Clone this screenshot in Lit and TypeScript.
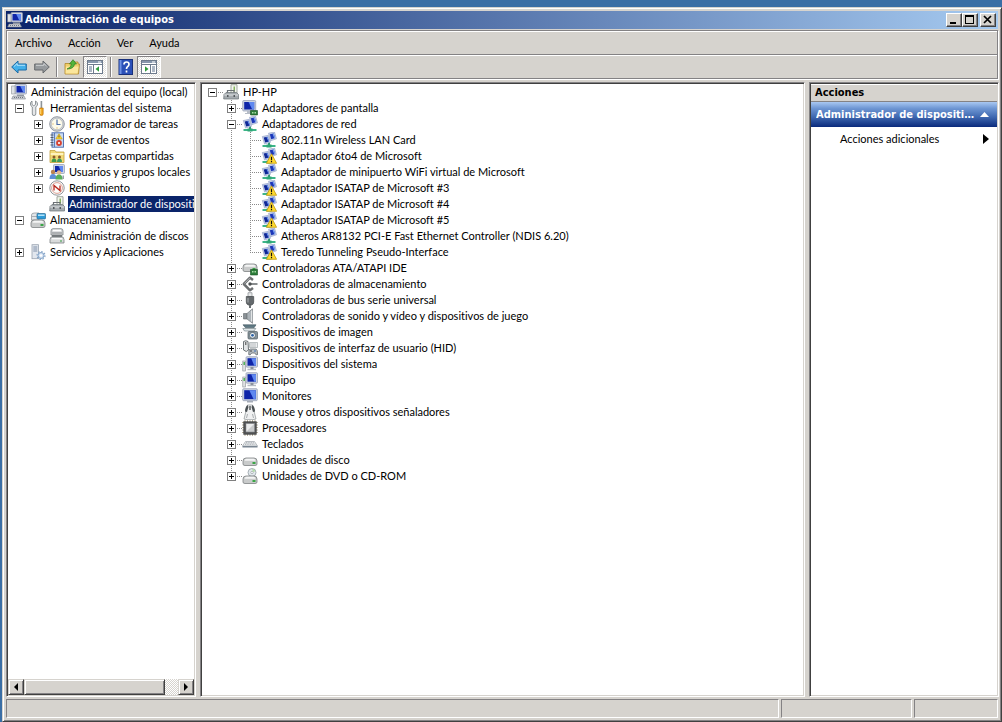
import { LitElement, html, css, svg, nothing, TemplateResult, SVGTemplateResult } from 'lit';
import { customElement, property } from 'lit/decorators.js';

interface Node {
  label: string;
  icon: string;
  open?: boolean;
  selected?: boolean;
  children?: Node[];
}

/* Building blocks shared by several glyphs. */
const screen = (x: number, y: number, w: number, h: number) => svg`
  <rect x=${x} y=${y} width=${w} height=${h} rx="1" fill="#cdd4e2" stroke="#8f99b0" stroke-width=".7"/>
  <rect x=${x + 1.5} y=${y + 1.5} width=${w - 3} height=${h - 3} fill="#0f25a8"/>
  <path d="M${x + w * 0.45} ${y + 1.5}H${x + w - 1.5}v${h - 3}h-${w * 0.15}z" fill="#5f88f0"/>`;

const drive = (y: number) => svg`
  <path d="M1 ${y + 3}q0-3 3-3h8q3 0 3 3v3q0 1.500-2 1.500H3q-2 0-2-1.500z" fill="#c9cbcb" stroke="#7d8183" stroke-width=".8"/>
  <path d="M2.500 ${y + 2.800}q.5-2 2-2h7q1.500 0 2 2z" fill="#f4f5f5"/>
  <rect x="10.500" y=${y + 4} width="3" height="2" fill="#3aa546"/>`;

const network = svg`
  <path d="M1.500 13h13v2h-13z" fill="#3cb487"/><path d="M7 10h2v4H7z" fill="#2b9a6c"/><path d="M5.500 12.500h5v3h-5z" fill="#2fa676"/>
  <path d="M7.500 1.200l6-1.200 2 6.800-6 2z" fill="#c3cfe9" stroke="#8e9cc2" stroke-width=".6"/>
  <path d="M8.800 2.300l3.900-.8 1.500 4.600-4 1.200z" fill="#1c37b8"/><path d="M11.500 1.800l1.200-.3 1.500 4.600-.8.300z" fill="#7ba3f3"/>
  <path d="M1.300 4.500l6-1.200 2.200 7-6 1.700z" fill="#c3cfe9" stroke="#8e9cc2" stroke-width=".6"/>
  <path d="M2.700 5.600l3.800-.8 1.600 4.700-3.900 1.100z" fill="#0f2796"/><path d="M5.400 5l1.100-.2 1.600 4.700-.7.200z" fill="#6d96ef"/>`;

const toolbox = svg`
  <path d="M8 .7h6v9H8z" fill="#f3f5ee" stroke="#8b9488" stroke-width=".8"/><path d="M10.500 2.500h1.500v5h-1.500z" fill="#86b45f"/>
  <path d="M4.500 9V6.500h6.500V9" fill="none" stroke="#6b7175" stroke-width="1.200"/>
  <path d="M1 10.500L3 8.500h10.500l2 2V15H.7z" fill="#a5abaf" stroke="#6b7277" stroke-width=".7"/>
  <path d="M1.200 11h14" stroke="#dfe2e4"/><path d="M4 11h1.500v2H4zM10.500 11H12v2h-1.500z" fill="#54595d"/>`;

const towerPc = svg`
  ${screen(4, .7, 11.5, 10.5)}
  <path d="M5.500 12.700h8.500v1.500H5.500z" fill="#b4bac2"/><path d="M8.500 11h3v2h-3z" fill="#8b929d"/>
  <rect x=".8" y="5" width="2.700" height="10" fill="#dfe2e4" stroke="#8a9094" stroke-width=".6"/><rect x="1.500" y="6" width="1.400" height="3" fill="#42b04c"/>`;

const ICONS: Record<string, SVGTemplateResult> = {
  computer: svg`${screen(4, .5, 11.5, 9.5)}
    <rect x=".7" y="2" width="3.300" height="8" fill="#dfe2e6" stroke="#8a9096" stroke-width=".6"/>
    <path d="M6 10.500h7v1.500H6z" fill="#9ca3ad"/><path d="M2 12h11l1.500 3H.7z" fill="#cdd1d6" stroke="#7d848d" stroke-width=".6"/>
    <path d="M3 13.500h9" stroke="#6f7680" stroke-dasharray="1 1"/>`,
  tools: svg`<path d="M2 1v3.500l1.800 1.300L5.500 4.500V1Q8 2 7.500 5L5.800 7v7q0 1.500-1.800 1.500T2.300 14V7Q.5 6 .4 4T2 1z" fill="#e6e8ea" stroke="#767d82" stroke-width=".8"/>
    <path d="M10.600 1h1.600v7h-1.600z" fill="#8d9499"/><path d="M9.700 8h3.500v6q0 1.500-1.700 1.500T9.700 14z" fill="#f0a41c" stroke="#b56d0c" stroke-width=".6"/><path d="M10.700 9v5" stroke="#ffdc82"/>`,
  clock: svg`<circle cx="8" cy="8" r="7.300" fill="#d3d7dc" stroke="#7c828a" stroke-width=".8"/><circle cx="8" cy="8" r="5.700" fill="#fdfbea" stroke="#9aa0a8" stroke-width=".5"/>
    <path d="M8 3.500V8.500h3.500" fill="none" stroke="#4a6cab" stroke-width="1.200"/><path d="M8 12.500v-1M3.500 8h1" stroke="#d29a3c"/>`,
  events: svg`<rect x="3" y=".8" width="11.500" height="14.400" fill="#c9daf3" stroke="#4667ad" stroke-width=".9"/><path d="M5.500 1v14" stroke="#4667ad" stroke-width=".8"/>
    <path d="M1.500 3h3M1.500 5.500h3M1.500 8h3M1.500 10.500h3M1.500 13h3" stroke="#4c535d" stroke-width=".9"/>
    <path d="M10 1.700l3.200 5.300H6.800z" fill="#ffd631" stroke="#b78f09" stroke-width=".5"/><path d="M10 3.500v2" stroke="#333" stroke-width=".8"/>
    <circle cx="10" cy="11" r="2.900" fill="#d8402f"/><path d="M9 10l2 2m0-2l-2 2" stroke="#fff" stroke-width=".8"/>`,
  shared: svg`<path d="M1 2.500h5l1 1.500h8v10.500H1z" fill="#f1d976" stroke="#c2a040" stroke-width=".8"/><path d="M1.700 5h12.600v2H1.700z" fill="#fff3bd"/>
    <circle cx="5" cy="9" r="1.500" fill="#8b5a2c"/><path d="M2.500 14q0-3.500 2.500-3.500T7.500 14z" fill="#3f9a48"/>
    <circle cx="10.500" cy="9" r="1.500" fill="#8b5a2c"/><path d="M8 14q0-3.500 2.500-3.500T13 14z" fill="#3c9a62"/>`,
  users: svg`${screen(4.500, .5, 11, 9)}
    <circle cx="4" cy="8" r="2.200" fill="#b98350"/><path d="M.5 15q0-5 3.500-5t3.500 5z" fill="#5c8fd6"/>
    <circle cx="10" cy="8.500" r="2.200" fill="#e2b98c"/><path d="M6.500 15.500q0-5 3.500-5t3.700 5z" fill="#58b05a"/><path d="M13.500 11.500h1.500V15h-1.500z" fill="#98a0aa"/>`,
  perf: svg`<circle cx="8" cy="8" r="7.200" fill="#fdfdfb" stroke="#85898e" stroke-width=".9"/><circle cx="8" cy="8" r="5.400" fill="none" stroke="#d9988c" stroke-width=".9"/>
    <path d="M5 10.500V5.500l6 5V5.500" fill="none" stroke="#b9281d" stroke-width="1.300"/>`,
  toolbox,
  storage: svg`<path d="M1.500 3q0-2 3-2h4.500v7H1.500z" fill="#e2e5e8" stroke="#858c92" stroke-width=".7"/><path d="M2 4.500h5" stroke="#9aa0a5" stroke-width=".8"/>
    <rect x="7" y="1.500" width="8.500" height="5.500" rx=".8" fill="#2e9bd8" stroke="#2a6c97" stroke-width=".7"/><path d="M8 2.500h6.500v1.500H8z" fill="#b3e2f8"/>
    ${drive(8)}`,
  disks: svg`<path d="M2 3q0-2.300 2-2.300h8q2 0 2 2.300v4H2z" fill="#d6d8da" stroke="#7b8184" stroke-width=".8"/><path d="M4 2.500h8" stroke="#fff" stroke-width="1.500"/><path d="M3 5h10" stroke="#85898c"/>
    <path d="M3 7h10v2H3z" fill="#74797c"/><path d="M2 9h12l1 2.500V15H1v-3.500z" fill="#d8dadb" stroke="#7b8184" stroke-width=".8"/><path d="M3 10.700h10" stroke="#fff" stroke-width="1.200"/>
    <rect x="11" y="12.500" width="2" height="1" fill="#39a045"/>`,
  services: svg`<rect x="2" y=".7" width="6.500" height="14" fill="#e2e7ee" stroke="#9aa3b0" stroke-width=".8"/>
    <path d="M3.300 3h4M3.300 5h4M3.300 7h4" stroke="#7e8fa8"/><circle cx="11" cy="11.500" r="3" fill="#d5e3f3" stroke="#86a5c8" stroke-width="1"/>
    <circle cx="11" cy="11.500" r="4" fill="none" stroke="#86a5c8" stroke-width="1.200" stroke-dasharray="1.500 1.600"/><circle cx="11" cy="11.500" r="1.200" fill="#fff"/>`,
  display: svg`${screen(.7, .5, 13, 10.5)}<path d="M5 11h4v2H5zM3 13h7v1H3z" fill="#b6bcc7"/>
    <path d="M8.500 10.500h7v4.500h-7z" fill="#2c7c39" stroke="#174f21" stroke-width=".6"/><path d="M10 12h1.500v1.500H10zM12.500 12H14v1.500h-1.500z" fill="#a9dba8"/>`,
  network,
  warn: svg`${network}<path d="M10.500 5.800L15.600 15.300H5.400z" fill="#ffd92e" stroke="#c29a12" stroke-width=".8" stroke-linejoin="round"/><path d="M10.500 8.700v3.500M10.500 13v1.200" stroke="#111" stroke-width="1.200"/>`,
  ata: svg`${drive(4)}<path d="M8.500 9.500h7V15h-7z" fill="#2c7c39" stroke="#174f21" stroke-width=".6"/><path d="M10 11h1.500v1.500H10zM12.500 11H14v1.500h-1.500z" fill="#a9dba8"/>`,
  controller: svg`<path d="M11 4L8 1.700 1.800 8 8 14.300 11 12" fill="none" stroke="#6b6e70" stroke-width="2.500" stroke-linejoin="round"/>
    <path d="M8 1.800L2.500 7.500" stroke="#c0c3c5" stroke-width=".8"/><path d="M8 8h7.500" stroke="#7c8082" stroke-width="1.800"/><circle cx="8" cy="8" r="1.700" fill="#4c5052"/>`,
  usb: svg`<path d="M6 .7h4v4H6z" fill="#e6e8e9" stroke="#888d90" stroke-width=".7"/><path d="M4.300 4.500h7.400V10q0 2.500-2.200 3H6.500q-2.200-.5-2.200-3z" fill="#64696c" stroke="#44484a" stroke-width=".7"/>
    <path d="M6 6v4.500" stroke="#a9aeb1"/><path d="M7 13h2v3H7z" fill="#6a6f72"/>`,
  sound: svg`<path d="M1.500 5.500H5v5.500H1.500z" fill="#8a9196" stroke="#62686c" stroke-width=".6"/><path d="M5 5.500L10.500.8v14.500L5 11z" fill="#adb4b9" stroke="#747b80" stroke-width=".7"/><path d="M9.700 2.500v11" stroke="#eef0f1"/>`,
  imaging: svg`<path d="M1 .8h13l-2 3H3.500z" fill="#5f7a84" stroke="#3e535c" stroke-width=".6"/><path d="M.8 4.500h13L12 7H2.500z" fill="#dfe6e8" stroke="#6c7a80" stroke-width=".6"/>
    <rect x="6" y="7.500" width="9.500" height="7.500" rx="1" fill="#87959d" stroke="#515c62" stroke-width=".7"/><circle cx="10.500" cy="11.300" r="2.900" fill="#eef3f5" stroke="#37474f" stroke-width=".6"/><circle cx="10.500" cy="11.300" r="1.400" fill="#2d62a5"/>`,
  hid: svg`<path d="M1.500 1.500q2.300-1.500 4.500 0l.5 8.500Q4.500 13 1.500 10z" fill="#e2e5e6" stroke="#5f666a" stroke-width=".9"/><path d="M3.800 2v3" stroke="#444"/>
    <path d="M7.500 2.500h8v5h-8z" fill="#eceeef" stroke="#a1a7ab" stroke-width=".7"/><path d="M8.500 4h6M8.500 6h6" stroke="#757b7f" stroke-width=".8" stroke-dasharray="1 1"/>
    <path d="M7 10q1-1.500 3-1h2.500q2-.5 2.700 1.500l.5 4q-1.500 1.500-3-1.500h-3q-1.500 3-3 1.500z" fill="#b5bcc1" stroke="#626a6f" stroke-width=".8"/><circle cx="9" cy="11" r=".8" fill="#333"/><circle cx="13" cy="11" r=".8" fill="#2e62b0"/>`,
  towerPc,
  monitor: svg`${screen(.7, .7, 14.6, 12)}<path d="M5 13h6v1.500H5z" fill="#a4abb7"/>`,
  mouse: svg`<path d="M5.500 1h5l3.500 14-3 .7H5L2 15z" fill="#f0f1f2" stroke="#8a9093" stroke-width=".7"/><path d="M5.500 1Q3 3 3 7.500L5 8l1.500-5zM10.500 1Q13 3 13 7.500L11 8 9.500 3z" fill="#4b5154"/>
    <path d="M8 2v4" stroke="#55595b" stroke-width="1.500"/><path d="M4.500 14l1-4M11.500 14l-1-4" stroke="#a9aeb0"/>`,
  cpu: svg`<path d="M.3 2.500h15.400M.3 5h15.400M.3 7.500h15.400M.3 10h15.400M.3 12.500h15.400M3 .3v15.400M5.500.3v15.400M8 .3v15.400M10.500.3v15.400M13 .3v15.400" stroke="#8f8465" stroke-width=".9"/>
    <rect x="1.300" y="1.300" width="13.400" height="13.400" fill="#4f5152"/><rect x="4" y="3.500" width="8.500" height="8.500" fill="#c8cacb" stroke="#8a8d8f" stroke-width=".6"/><path d="M4.500 11.500V4h7.500z" fill="#ebeced"/>`,
  keyboard: svg`<path d="M3.500 5.500h9L15.500 10H.5z" fill="#eceef0" stroke="#9da4a9" stroke-width=".7"/><path d="M.5 10h15v1.500H.5z" fill="#7a8692"/>
    <path d="M4 6.800h8.500M3 8.200h10.500" stroke="#8b9298" stroke-width=".8" stroke-dasharray="1 .7"/>`,
  disk: svg`${drive(6)}`,
  dvd: svg`<circle cx="10" cy="4.500" r="4" fill="#e2e8ec" stroke="#8a949b" stroke-width=".7"/><circle cx="10" cy="4.500" r="1.200" fill="#fff" stroke="#8a949b" stroke-width=".6"/>
    <path d="M10 .8a4 4 0 0 1 3.500 2.500L11 4z" fill="#b2dba9"/>${drive(8)}`,
  back: svg`<path d="M.7 8L7 2V5h8.300v6H7v3z" fill="#44b0ea" stroke="#1b6aa5" stroke-linejoin="round"/><path d="M3 7.500L6.200 4.500v1.800H14" fill="none" stroke="#b3e3fb"/>`,
  forward: svg`<path d="M15.300 8L9 2V5H.7v6H9v3z" fill="#969a9d" stroke="#66696c" stroke-linejoin="round"/><path d="M2 6.300h7.800V4.500L12.500 7" fill="none" stroke="#cfd2d4"/>`,
  up: svg`<path d="M1 4.500h5l1.500-1.500H14v2h1.500l-1 10H1z" fill="#f0cf6a" stroke="#b1872a" stroke-width=".8"/><path d="M2 7.500h12.500l-1 7H1.500z" fill="#fbe69c"/>
    <path d="M3 10q4-1 4.500-5H5.500L9 .7 12.500 5h-2Q10 10 3 10z" fill="#55b53c" stroke="#2c7c1c" stroke-width=".7"/>`,
  paneLeft: svg`<rect x=".5" y="1.500" width="15" height="13" fill="#fff" stroke="#6e7b8c"/><path d="M1 2h14v2H1z" fill="#8797ac"/><path d="M11 3h3" stroke="#fff"/><path d="M1 5.500h14" stroke="#6e7b8c"/>
    <path d="M6.500 6v8" stroke="#6e7b8c"/><path d="M2 8h3M2 10h3M2 12h3" stroke="#5d708b"/><path d="M12 7.200v5.600L8.500 10z" fill="#2f9b3a"/>`,
  help: svg`<rect x="1" y=".5" width="13.500" height="15" fill="#2b50b8" stroke="#18307a"/><path d="M1.500 1h2v14h-2z" fill="#6e90e4"/>
    <path d="M6 5.500Q6 3 8.500 3T11 5.300Q11 6.800 9.500 7.700 8.500 8.300 8.500 10M8.500 11.500v2" fill="none" stroke="#fff" stroke-width="1.700"/>`,
  paneRight: svg`<rect x=".5" y="1.500" width="15" height="13" fill="#fff" stroke="#6e7b8c"/><path d="M1 2h14v2H1z" fill="#8797ac"/><path d="M11 3h3" stroke="#fff"/><path d="M1 5.500h14" stroke="#6e7b8c"/>
    <path d="M9.500 6v8" stroke="#6e7b8c"/><path d="M11 8h3M11 10h3M11 12h3" stroke="#5d708b"/><path d="M4 7.200v5.600L7.500 10z" fill="#2f9b3a"/>`,
};

const icon = (name: string) => html`<svg viewBox="0 0 16 16" width="16" height="16" aria-hidden="true">${ICONS[name]}</svg>`;

const CONSOLE_TREE: Node = {
  label: 'Administración del equipo (local)', icon: 'computer', open: true, children: [
    { label: 'Herramientas del sistema', icon: 'tools', open: true, children: [
      { label: 'Programador de tareas', icon: 'clock', children: [] },
      { label: 'Visor de eventos', icon: 'events', children: [] },
      { label: 'Carpetas compartidas', icon: 'shared', children: [] },
      { label: 'Usuarios y grupos locales', icon: 'users', children: [] },
      { label: 'Rendimiento', icon: 'perf', children: [] },
      { label: 'Administrador de dispositivos', icon: 'toolbox', selected: true },
    ] },
    { label: 'Almacenamiento', icon: 'storage', open: true, children: [
      { label: 'Administración de discos', icon: 'disks' },
    ] },
    { label: 'Servicios y Aplicaciones', icon: 'services', children: [] },
  ],
};

const DEVICE_TREE: Node = {
  label: 'HP-HP', icon: 'toolbox', open: true, children: [
    { label: 'Adaptadores de pantalla', icon: 'display', children: [] },
    { label: 'Adaptadores de red', icon: 'network', open: true, children: [
      { label: '802.11n Wireless LAN Card', icon: 'network' },
      { label: 'Adaptador 6to4 de Microsoft', icon: 'warn' },
      { label: 'Adaptador de minipuerto WiFi virtual de Microsoft', icon: 'network' },
      { label: 'Adaptador ISATAP de Microsoft #3', icon: 'warn' },
      { label: 'Adaptador ISATAP de Microsoft #4', icon: 'warn' },
      { label: 'Adaptador ISATAP de Microsoft #5', icon: 'warn' },
      { label: 'Atheros AR8132 PCI-E Fast Ethernet Controller (NDIS 6.20)', icon: 'network' },
      { label: 'Teredo Tunneling Pseudo-Interface', icon: 'warn' },
    ] },
    { label: 'Controladoras ATA/ATAPI IDE', icon: 'ata', children: [] },
    { label: 'Controladoras de almacenamiento', icon: 'controller', children: [] },
    { label: 'Controladoras de bus serie universal', icon: 'usb', children: [] },
    { label: 'Controladoras de sonido y vídeo y dispositivos de juego', icon: 'sound', children: [] },
    { label: 'Dispositivos de imagen', icon: 'imaging', children: [] },
    { label: 'Dispositivos de interfaz de usuario (HID)', icon: 'hid', children: [] },
    { label: 'Dispositivos del sistema', icon: 'towerPc', children: [] },
    { label: 'Equipo', icon: 'towerPc', children: [] },
    { label: 'Monitores', icon: 'monitor', children: [] },
    { label: 'Mouse y otros dispositivos señaladores', icon: 'mouse', children: [] },
    { label: 'Procesadores', icon: 'cpu', children: [] },
    { label: 'Teclados', icon: 'keyboard', children: [] },
    { label: 'Unidades de disco', icon: 'disk', children: [] },
    { label: 'Unidades de DVD o CD-ROM', icon: 'dvd', children: [] },
  ],
};

@customElement('tree-view')
export class TreeView extends LitElement {
  @property({ attribute: false }) root!: Node;
  @property({ type: Boolean }) lines = false;
  @property({ type: Boolean }) rootToggle = false;

  static styles = css`
    :host { display: block; overflow: hidden; }
    .tree { margin: 0; padding: 0; list-style: none; }
    .row { display: flex; height: 16px; line-height: 16px; white-space: nowrap; }
    .cell { flex: none; width: 19px; height: 16px; display: flex; align-items: center; padding-left: 4px; box-sizing: border-box; }
    .dots-v { background: repeating-linear-gradient(#8a8a8a 0 1px, transparent 1px 2px) 8px 0 / 1px 100% no-repeat; }
    .dots-h { background: repeating-linear-gradient(90deg, #8a8a8a 0 1px, transparent 1px 2px) 8px 8px / 11px 1px no-repeat; }
    .dots-v.dots-h {
      background:
        repeating-linear-gradient(#8a8a8a 0 1px, transparent 1px 2px) 8px 0 / 1px 100% no-repeat,
        repeating-linear-gradient(90deg, #8a8a8a 0 1px, transparent 1px 2px) 8px 8px / 11px 1px no-repeat;
    }
    .dots-v.dots-h.last {
      background:
        repeating-linear-gradient(#8a8a8a 0 1px, transparent 1px 2px) 8px 0 / 1px 8px no-repeat,
        repeating-linear-gradient(90deg, #8a8a8a 0 1px, transparent 1px 2px) 8px 8px / 11px 1px no-repeat;
    }
    .toggle { width: 9px; height: 9px; padding: 0; margin: 1px 0 0; border: 1px solid #7f7f7f; display: block; line-height: 0;
      background:
        linear-gradient(#000, #000) 50% 50% / 5px 1px no-repeat,
        #fff; }
    .toggle.plus {
      background:
        linear-gradient(#000, #000) 50% 50% / 5px 1px no-repeat,
        linear-gradient(#000, #000) 50% 50% / 1px 5px no-repeat,
        #fff; }
    svg { flex: none; display: block; }
    .label { margin-left: 3px; padding: 0 1px; }
    .selected { background: #0a246a; color: #fff; }
  `;

  private renderNode(node: Node, depth: number, last: boolean, trail: boolean[]): TemplateResult {
    const hasCell = depth > 0 || this.rootToggle;
    const guides = depth > 0 ? (this.rootToggle ? trail : trail.slice(1)) : [];
    const cls = ['cell'];
    if (this.lines) {
      cls.push('dots-h');
      if (depth > 0) cls.push('dots-v');
      if (last) cls.push('last');
    }
    return html`
      <li class="row" role="treeitem" aria-level=${depth + 1}>
        ${guides.map((on) => html`<span class="cell ${this.lines && on ? 'dots-v' : ''}"></span>`)}
        ${hasCell ? html`<span class=${cls.join(' ')}>${node.children
          ? html`<button class="toggle ${node.open ? '' : 'plus'}" aria-label="${node.open ? 'Contraer' : 'Expandir'} ${node.label}"></button>`
          : nothing}</span>` : nothing}
        ${icon(node.icon)}
        <span class="label ${node.selected ? 'selected' : ''}">${node.label}</span>
      </li>
      ${node.open ? node.children!.map((child, i, all) =>
        this.renderNode(child, depth + 1, i === all.length - 1, [...trail, depth > 0 && !last])) : nothing}`;
  }

  render() {
    return html`<ul class="tree" role="tree">${this.renderNode(this.root, 0, false, [])}</ul>`;
  }
}

@customElement('app-root')
export class AppRoot extends LitElement {
  static styles = css`
    :host { display: block; box-sizing: border-box; height: 100vh; padding: 7px 0 0 2px; background: #3a6ea5; color: #000;
      font: 11px/16px Lato, Tahoma, sans-serif; font-variant-ligatures: none; }
    button { font: inherit; color: inherit; }
    .window { box-sizing: border-box; height: 100%; display: flex; flex-direction: column; padding: 2px; background: #d6d3ce;
      border: 1px solid; border-color: #d6d3ce #404040 #404040 #d6d3ce; box-shadow: inset 1px 1px #fff, inset -1px -1px #848284; }

    .title { display: flex; align-items: center; height: 18px; margin: 1px 1px 0; padding: 0 2px 0 1px; flex: none;
      background: linear-gradient(90deg, #0a246a, #a6caf0); color: #fff; }
    .title h1 { margin: 0 0 0 2px; font: bold 11px/16px "DejaVu Sans Condensed", Tahoma, sans-serif; flex: 1; }
    .title svg { display: block; }
    .winbtn { width: 16px; height: 14px; padding: 0; display: block; background: #d6d3ce; border: 1px solid; border-color: #fff #404040 #404040 #fff;
      box-shadow: inset -1px -1px #848284; }
    .close { margin-left: 2px; }

    .bars { flex: none; margin: 1px 1px 0; border: 1px solid #848284; box-shadow: inset 1px 1px #fff, 1px 1px #fff; }
    .menu { display: flex; height: 23px; align-items: center; border-bottom: 1px solid #848284; }
    .menu button { border: 0; background: none; padding: 0 8px; }
    .tools { display: flex; align-items: center; height: 22px; border-top: 1px solid #fff; }
    .tool { width: 23px; height: 22px; box-sizing: border-box; padding: 0; border: 1px solid transparent; background: none; display: flex; align-items: center; justify-content: center; flex: none; }
    .pressed { width: 24px; border-color: #848284 #fff #fff #848284; background: repeating-conic-gradient(#fff 0 25%, #e3e1dd 0 50%) 0 0 / 2px 2px; }
    .sep { width: 1px; height: 20px; margin: 0 3px; background: #848284; box-shadow: 1px 0 #fff; flex: none; }

    .panes { flex: 1; min-height: 0; display: grid; grid-template-columns: 190px minmax(0, 1fr) 190px; gap: 4px; margin: 3px 0 0 1px; }
    .pane { min-width: 0; box-sizing: border-box; display: flex; flex-direction: column; background: #fff; border: 1px solid; border-color: #848284 #fff #fff #848284;
      box-shadow: inset 1px 1px #404040, inset -1px -1px #d6d3ce; padding: 1px; }
    .pane tree-view { flex: 1; min-height: 0; }
    .console { padding-left: 4px; }
    .devices { padding-left: 3px; }

    .scroll { display: flex; height: 16px; flex: none; margin-left: -3px; background: repeating-conic-gradient(#fff 0 25%, #d6d3ce 0 50%) 0 0 / 2px 2px; }
    .scroll button { padding: 0; width: 16px; background: #d6d3ce; border: 1px solid; border-color: #d6d3ce #404040 #404040 #d6d3ce; box-shadow: inset 1px 1px #fff, inset -1px -1px #848284; display: grid; place-items: center; }
    .scroll .thumb { width: 141px; }
    .scroll .right { margin-left: auto; }

    .head { margin: 0; height: 16px; padding: 0 4px; background: #d6d3ce; border-top: 1px solid #fff; border-bottom: 1px solid #848284; font: bold 11px/16px "DejaVu Sans Condensed", Tahoma, sans-serif; }
    .group { display: flex; align-items: center; margin: 0; height: 25px; padding: 0 8px 0 5px; border: 0; text-align: left; color: #fff;
      font: bold 11px/16px "DejaVu Sans Condensed", Tahoma, sans-serif;
      background: linear-gradient(#a9c8f2, #6f97d4 25%, #3f68b0 60%, #0a2a7c); }
    .group span { flex: 1; min-width: 0; overflow: hidden; text-overflow: ellipsis; white-space: nowrap; }
    .group svg { margin-left: 4px; }
    .action { display: flex; align-items: center; height: 24px; padding: 0 8px 0 29px; border: 0; background: none; text-align: left; }
    .action span { flex: 1; }

    .status { flex: none; display: grid; grid-template-columns: minmax(0, 1fr) 131px 84px; gap: 2px; height: 19px; margin: 2px 1px 1px; }
    .status div { border: 1px solid; border-color: #848284 #fff #fff #848284; }
  `;

  render() {
    return html`
      <main class="window">
        <header class="title">
          ${icon('computer')}
          <h1>Administración de equipos</h1>
          <button class="winbtn" aria-label="Minimizar"><svg width="14" height="12" viewBox="0 0 14 12"><path d="M3 8h6v2H3z"/></svg></button>
          <button class="winbtn" aria-label="Maximizar"><svg width="14" height="12" viewBox="0 0 14 12"><path d="M2 1h9v9H2zM3 3v6h7V3z" fill-rule="evenodd"/></svg></button>
          <button class="winbtn close" aria-label="Cerrar"><svg width="14" height="12" viewBox="0 0 14 12"><path d="M3 2l7 7M10 2L3 9" stroke="#000" stroke-width="1.700"/></svg></button>
        </header>

        <div class="bars">
          <nav class="menu">
            ${['Archivo', 'Acción', 'Ver', 'Ayuda'].map((m) => html`<button>${m}</button>`)}
          </nav>
          <div class="tools" role="toolbar">
            <button class="tool" aria-label="Atrás">${icon('back')}</button>
            <button class="tool" aria-label="Adelante">${icon('forward')}</button>
            <span class="sep"></span>
            <button class="tool" aria-label="Subir un nivel">${icon('up')}</button>
            <button class="tool pressed" aria-label="Mostrar árbol de consola">${icon('paneLeft')}</button>
            <span class="sep"></span>
            <button class="tool" aria-label="Ayuda">${icon('help')}</button>
            <button class="tool pressed" aria-label="Mostrar panel de acciones">${icon('paneRight')}</button>
          </div>
        </div>

        <div class="panes">
          <section class="pane console">
            <tree-view .root=${CONSOLE_TREE}></tree-view>
            <div class="scroll">
              <button aria-label="Desplazar a la izquierda"><svg width="8" height="8" viewBox="0 0 8 8"><path d="M6 0v8L2 4z"/></svg></button>
              <button class="thumb" aria-label="Barra de desplazamiento"></button>
              <button class="right" aria-label="Desplazar a la derecha"><svg width="8" height="8" viewBox="0 0 8 8"><path d="M2 0v8l4-4z"/></svg></button>
            </div>
          </section>
          <section class="pane devices">
            <tree-view .root=${DEVICE_TREE} lines .rootToggle=${true}></tree-view>
          </section>
          <aside class="pane">
            <h2 class="head">Acciones</h2>
            <button class="group"><span>Administrador de dispositivos</span><svg width="9" height="5" viewBox="0 0 9 5"><path d="M0 5h9L4.500 0z" fill="#fff"/></svg></button>
            <button class="action"><span>Acciones adicionales</span><svg width="6" height="10" viewBox="0 0 6 10"><path d="M0 0v10l6-5z"/></svg></button>
          </aside>
        </div>

        <footer class="status"><div></div><div></div><div></div></footer>
      </main>`;
  }
}
